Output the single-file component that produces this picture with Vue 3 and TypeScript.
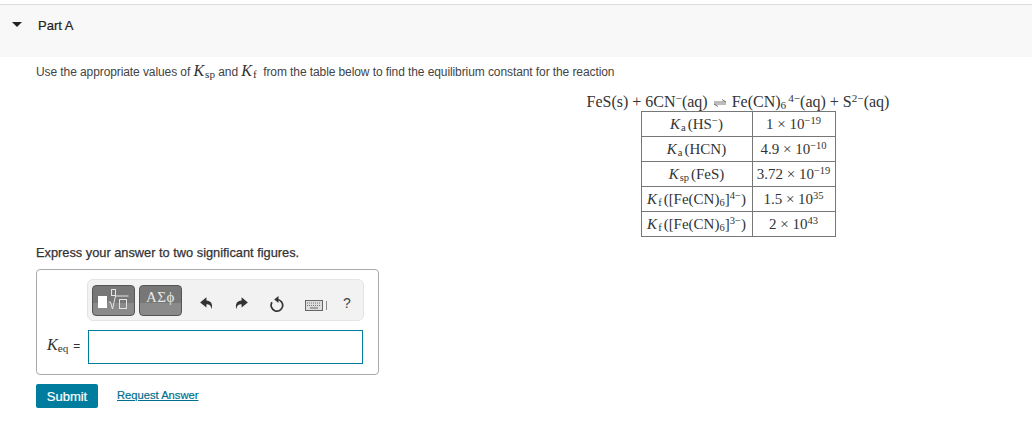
<template>
  <div class="page">
    <header class="part-head">
      <span class="caret"></span>
      <h2 class="part-title">Part A</h2>
    </header>

    <section class="part-body">
      <p class="intro">
        Use the appropriate values of
        <span class="math k-inline"><i>K</i><sub>sp</sub></span> and
        <span class="math k-inline"><i>K</i><sub>f</sub></span>
        &nbsp;from the table below to find the equilibrium constant for the reaction
      </p>

      <div class="reaction-block">
        <div class="reaction math">
          FeS(s) + 6CN<sup>−</sup>(aq)
          <svg class="equil" width="14" height="8" viewBox="0 0 14 8">
            <path d="M1 3h12L9 .5M13 5H1l4 2.5" fill="none" stroke="#555" stroke-width="0.8" />
          </svg>
          Fe(CN)<sub>6</sub><sup class="wide">4−</sup>(aq) + S<sup>2−</sup>(aq)
        </div>
        <table class="constants math">
          <tbody>
            <tr v-for="row in rows" :key="row.id">
              <td class="c-name">
                <i>K</i><sub class="k-sub">{{ row.sub }}</sub>(<template v-if="row.complex">[Fe(CN)<sub>6</sub>]<sup>{{ row.charge }}</sup></template><template v-else>{{ row.species }}<sup v-if="row.charge">{{ row.charge }}</sup></template>)
              </td>
              <td class="c-value">{{ row.mant }} × 10<sup>{{ row.exp }}</sup></td>
            </tr>
          </tbody>
        </table>
      </div>

      <p class="instruction">Express your answer to two significant figures.</p>

      <div class="answer-box">
        <div class="toolbar">
          <button type="button" class="tpl-btn">
            <span class="blk"></span>
            <svg width="22" height="24" viewBox="0 0 22 24" fill="none" stroke="#e4e4e4" stroke-width="1">
              <rect x="3.500" y="1.500" width="4" height="6" />
              <path d="M.5 14h2l2 7 3-13h13" />
              <rect x="11.500" y="11.500" width="7" height="9" />
            </svg>
          </button>
          <button type="button" class="tpl-btn sym">ΑΣϕ</button>
          <svg class="undo" width="16" height="16" viewBox="0 0 14 14"><path d="M6.500 2 1 6.500 6.500 11V8.200c2.400 0 4 .8 4.500 4.300 1.400-4.600-.6-7.600-4.500-7.700z" fill="#333" /></svg>
          <svg class="redo" width="16" height="16" viewBox="0 0 14 14"><path d="M7.500 2 13 6.500 7.500 11V8.200c-2.400 0-4 .8-4.500 4.300C1.600 7.900 3.600 4.900 7.500 4.800z" fill="#333" /></svg>
          <svg class="reset" width="16" height="17" viewBox="0 0 16 17"><path d="M8 4.500A5.800 5.800 0 1 1 3 7.200" fill="none" stroke="#333" stroke-width="1.700" /><path d="M9.500 1V8L5.200 4.500z" fill="#333" /></svg>
          <svg class="kbd" width="18" height="11" viewBox="0 0 18 11">
            <rect x=".5" y=".5" width="17" height="10" fill="#ddd" stroke="#666" />
            <path d="M2 3h14M2 5.500h14" stroke="#777" stroke-dasharray="1 1" />
            <path d="M5 8h8" stroke="#666" />
          </svg>
          <span class="sep"></span>
          <span class="help">?</span>
        </div>
        <div class="answer-row">
          <label class="answer-label"><span class="math"><i>K</i><sub>eq</sub></span><span class="eq">=</span></label>
          <input class="answer-input" type="text" />
        </div>
      </div>

      <div class="actions">
        <button type="button" class="submit">Submit</button>
        <a class="request" href="#">Request Answer</a>
      </div>
    </section>
  </div>
</template>

<script setup lang="ts">
interface ConstRow {
  id: string
  sub: string
  species?: string
  complex?: boolean
  charge?: string
  mant: string
  exp: string
}

const rows: ConstRow[] = [
  { id: 'hs', sub: 'a', species: 'HS', charge: '−', mant: '1', exp: '−19' },
  { id: 'hcn', sub: 'a', species: 'HCN', mant: '4.9', exp: '−10' },
  { id: 'fes', sub: 'sp', species: 'FeS', mant: '3.72', exp: '−19' },
  { id: 'f4', sub: 'f', complex: true, charge: '4−', mant: '1.5', exp: '35' },
  { id: 'f3', sub: 'f', complex: true, charge: '3−', mant: '2', exp: '43' }
]
</script>

<style>
html,
body {
  margin: 0;
  background: #fff;
}
</style>

<style scoped>
.page {
  width: 1032px;
  height: 441px;
  overflow: hidden;
  font-family: "Liberation Sans", Arial, sans-serif;
  color: #333;
  padding-top: 4px;
  box-sizing: border-box;
}

.part-head {
  display: flex;
  align-items: flex-start;
  height: 52px;
  background: #f8f8f8;
  border-top: 1px solid #ddd;
}

.caret {
  width: 0;
  height: 0;
  margin: 17px 0 0 12px;
  border-left: 5px solid transparent;
  border-right: 5px solid transparent;
  border-top: 5px solid #222;
}

.part-title {
  margin: 14px 0 0 16px;
  font-size: 13px;
  line-height: 14px;
  font-weight: 400;
  color: #222;
  -webkit-text-stroke: 0.2px #222;
}

.part-body {
  padding: 6px 0 0 36px;
}

.intro {
  margin: 0;
  font-size: 12px;
  line-height: 16px;
  letter-spacing: -0.09px;
  color: #444;
}

.math {
  font-family: "Liberation Serif", "Times New Roman", serif;
  color: #333;
}

.math sub,
.math sup {
  font-size: 70%;
  line-height: 0;
}

.math sup {
  vertical-align: 0.45em;
}

.math sub {
  vertical-align: -0.2em;
}

.k-inline {
  font-size: 16px;
  letter-spacing: 0;
}

.k-inline sub {
  margin-left: 1px;
}

.reaction-block {
  display: flex;
  flex-direction: column;
  align-items: center;
  padding-left: 408px;
  margin-top: 13px;
}

.reaction {
  font-size: 16px;
  line-height: 18px;
  white-space: nowrap;
}

.equil {
  margin: 0 1px;
}

.wide {
  margin-left: 2px;
}

.constants {
  border-collapse: collapse;
  font-size: 15px;
  line-height: 16px;
}

.constants td {
  border: 1px solid #777;
  height: 24px;
  padding: 0;
  text-align: center;
  white-space: nowrap;
}

.k-sub {
  margin: 0 2px 0 1px;
}

.c-name {
  width: 110px;
}

.c-value {
  width: 82px;
}

.instruction {
  margin: 8px 0 0;
  font-size: 12.8px;
  line-height: 16px;
  color: #333;
  -webkit-text-stroke: 0.25px #333;
}

.answer-box {
  box-sizing: border-box;
  width: 343px;
  height: 106px;
  margin-top: 8px;
  padding: 9px 14px 0 50px;
  border: 1px solid #aaa;
  border-radius: 4px;
}

.toolbar {
  box-sizing: border-box;
  display: flex;
  align-items: center;
  height: 42px;
  width: 277px;
  padding-left: 4px;
  background: #f2f2f2;
  border: 1px solid #e4e4e4;
  border-radius: 6px;
}

.tpl-btn {
  box-sizing: border-box;
  display: flex;
  align-items: center;
  justify-content: center;
  gap: 1px;
  width: 43px;
  height: 31px;
  padding: 0;
  margin-right: 4px;
  border: 1px solid #555;
  border-radius: 4px;
  background: linear-gradient(#777 0 60%, #8a8a8a 60% 100%);
  color: #e8e8e8;
  font-family: "Liberation Serif", serif;
  font-size: 15px;
}

.sym {
  padding-bottom: 5px;
  letter-spacing: 0.5px;
}

.blk {
  width: 9px;
  height: 12px;
  background: #fff;
  margin-top: 3px;
}

.undo {
  margin: 6px 0 0 13px;
}

.redo {
  margin: 6px 0 0 18px;
}

.reset {
  margin: 6px 0 0 20px;
}

.kbd {
  margin: 11px 0 0 20px;
}

.sep {
  width: 1px;
  height: 9px;
  margin: 11px 0 0 3px;
  background: #888;
}

.help {
  margin: 6px 0 0 16px;
  font-size: 14px;
  color: #444;
}

.answer-row {
  display: flex;
  align-items: center;
  margin: 9px 0 0 -40px;
}

.answer-label {
  display: flex;
  align-items: baseline;
  width: 41px;
  padding-bottom: 4px;
  font-size: 12px;
  white-space: nowrap;
}

.answer-label .math {
  font-size: 16px;
}

.eq {
  margin-left: 5px;
}

.answer-input {
  box-sizing: border-box;
  width: 275px;
  height: 34px;
  border: 1px solid #007c9e;
  outline: none;
  padding: 0;
}

.actions {
  display: flex;
  align-items: center;
  margin-top: 9px;
}

.submit {
  box-sizing: border-box;
  width: 62px;
  height: 24px;
  padding: 0;
  border: none;
  border-radius: 2px;
  background: #007c9e;
  color: #fff;
  font-family: "Liberation Sans", Arial, sans-serif;
  font-size: 13px;
  -webkit-text-stroke: 0.2px #fff;
}

.request {
  margin-left: 19px;
  padding-bottom: 2px;
  font-size: 11.2px;
  color: #00708f;
  -webkit-text-stroke: 0.2px #00708f;
}
</style>
